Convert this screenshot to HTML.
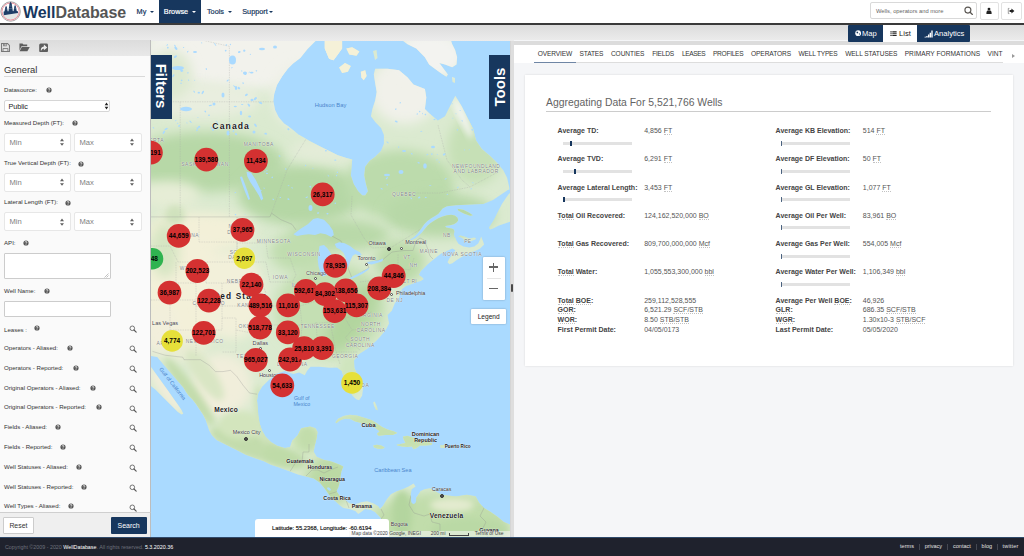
<!DOCTYPE html>
<html><head><meta charset="utf-8">
<style>
*{box-sizing:border-box;margin:0;padding:0}
html,body{width:1024px;height:556px;overflow:hidden;background:#f5f6f8;font-family:"Liberation Sans",sans-serif;color:#333}
.abs{position:absolute}
#nav{left:0;top:0;width:1024px;height:25px;background:#fff;border-bottom:2px solid #3a3a3a}
#band{left:0;top:25px;width:1024px;height:16px;background:linear-gradient(#dcdcdc,#ececec)}
#logoText{left:23px;top:3px;font-size:16px;font-weight:bold;letter-spacing:-0.05px;line-height:20px;white-space:nowrap}
.nv{top:0;height:23px;line-height:23px;font-size:7.3px;color:#17375e;-webkit-text-stroke:.2px;text-align:center;white-space:nowrap}
.caret{display:inline-block;width:0;height:0;border-left:2px solid transparent;border-right:2px solid transparent;border-top:2px solid currentColor;vertical-align:middle;margin-left:2px}
#left{left:0;top:40px;width:151px;height:497px;background:#fafafa;border-right:1px solid #bdbdbd}
#ltool{left:0;top:40px;width:151px;height:16px;background:linear-gradient(#dcdcdc,#e8e8e8);border-right:1px solid #bdbdbd}
#lfoot{left:0;top:512px;width:151px;height:25px;background:#efefef;border-top:1px solid #cfcfcf;border-right:1px solid #bdbdbd}
.lbl{left:4px;font-size:6.1px;color:#333;white-space:nowrap;line-height:8px}
.inp{background:#fff;border:1px solid #ddd;border-radius:1px}
.ph{font-size:7.6px;color:#808080;line-height:9px}
#map{left:151px;top:41px;width:359px;height:496px;background:#aadaff;overflow:hidden}
#split{left:509.6px;top:41px;width:4.2px;height:496px;background:linear-gradient(90deg,#cfcfcf,#dedede 30%,#dedede)}
#right{left:514px;top:40px;width:510px;height:497px;background:#f5f6f8}
#footer{left:0;top:537px;width:1024px;height:19px;background:#1f222d;border-top:1px solid #2f4a6b}
.vtab{background:#17375e;color:#fff;font-weight:bold;font-size:15px}
.tab{top:48.5px;font-size:6.6px;color:#333;white-space:nowrap;line-height:10px}
.k{font-size:7px;font-weight:bold;color:#444;white-space:nowrap;line-height:8px}
.v{font-size:7px;color:#555;white-space:nowrap;line-height:8px}
.u{border-bottom:1px dotted #c2c2c2}
.bar{height:3px;background:#e2e2e2;width:69.5px}
.tick{width:2px;height:5px;background:#17375e}
.bub{border-radius:50%;background:#d43131;color:#000;font-weight:bold;font-size:6.5px;text-align:center;overflow:hidden;white-space:nowrap}
.ml{position:absolute;transform:translate(-50%,-50%);white-space:nowrap;text-align:center;line-height:1.1;text-shadow:0 0 1px #fff,0 0 1px #fff}
</style></head><body>
<!-- NAV -->
<div id="nav" class="abs"></div>
<svg class="abs" style="left:0;top:0" width="24" height="24" viewBox="0 0 24 24">
<circle cx="10.6" cy="11.5" r="9.7" fill="#fff" stroke="#8d8d8d" stroke-width="0.8"/>
<path d="M3 15.4 L18.2 12.9 Q19 17 15 19.6 Q10.6 21.6 6 19.4 Q3.4 17.8 3 15.4 Z" fill="#e3e7e6"/>
<circle cx="10.6" cy="11.5" r="8.6" fill="none" stroke="#ee8f9c" stroke-width="1"/>
<path d="M4.3 12.6 L5.3 7.2 L6.1 5.7 L6.9 7.2 L7.9 12.6 Z M8.3 12.6 L9.5 3.6 L10.6 1.7 L11.7 3.6 L13 12.6 Z M13.3 12.6 L14.3 6.4 L15.1 4.8 L15.9 6.4 L17 12.6 Z" fill="#1f3d66"/>
<path d="M3.6 11.4 L17.6 11 L18.1 13.1 L3.7 15.3 Z" fill="#1f3d66"/>
<path d="M5.3 9 H6.9 M9.4 6 H11.8 M9 8.6 H12.2 M14.2 8.2 H16" stroke="#fff" stroke-width="0.4" opacity=".55"/>
</svg>
<div id="logoText" class="abs"><span style="color:#17375e">Well</span><span style="color:#555">Database</span></div>
<div class="abs nv" style="left:132px;width:27px">My <i class="caret"></i></div>
<div class="abs nv" style="left:159px;width:42px;background:#17375e;color:#fff">Browse <i class="caret"></i></div>
<div class="abs nv" style="left:201px;width:37px">Tools <i class="caret"></i></div>
<div class="abs nv" style="left:237px;width:41px">Support<i class="caret" style="margin-left:1px"></i></div>
<div class="abs inp" style="left:870px;top:2px;width:107px;height:17px;border-color:#d9d9d9;border-radius:2px"></div>
<div class="abs" style="left:876px;top:7.6px;font-size:5.75px;color:#666;line-height:7px;white-space:nowrap">Wells, operators and more</div>
<svg class="abs" style="left:963px;top:5.3px" width="11" height="11" viewBox="0 0 11 11"><circle cx="4.9" cy="5.1" r="3" fill="none" stroke="#5a5652" stroke-width="1.1"/><path d="M7.1 7.3 L9.4 9.4" stroke="#5a5652" stroke-width="1.3" stroke-linecap="round"/></svg>
<div class="abs inp" style="left:980px;top:2px;width:19px;height:18px;border-color:#e2e2e2;border-radius:2px"></div>
<svg class="abs" style="left:984.7px;top:7.4px" width="8" height="8" viewBox="0 0 8 8"><circle cx="4" cy="2.1" r="1.45" fill="#222"/><path d="M1.4 6.9 Q1.3 3.6 2.8 3.5 H5.2 Q6.7 3.6 6.6 6.9 Z" fill="#222"/></svg>
<div class="abs inp" style="left:1001px;top:2px;width:21px;height:18px;border-color:#e2e2e2;border-radius:2px"></div>
<svg class="abs" style="left:1007px;top:7.4px" width="9" height="8" viewBox="0 0 9 8"><path d="M2.4 1.4 H1.3 V6.6 H2.4" fill="none" stroke="#777" stroke-width="0.7"/><path d="M2.6 3 H4.4 V1.5 L7.4 4 L4.4 6.5 V5 H2.6 Z" fill="#222"/></svg>
<div id="band" class="abs"></div>

<!-- LEFT -->
<div id="left" class="abs"></div>
<div id="ltool" class="abs"></div>
<svg class="abs" style="left:1.1px;top:42.9px" width="9.1" height="9.1" viewBox="0 0 10 10"><path d="M0.6 0.6 H7.2 L9.3 2.7 V9.4 H0.6 Z" fill="none" stroke="#777" stroke-width="1.1"/><path d="M2.3 0.8 V3.6 H6.3 V0.8 Z" fill="#808080"/><path d="M4.6 1 V3" stroke="#e4e4e4" stroke-width="0.9"/><path d="M2.2 9.2 V6.1 H7.6 V9.2" fill="none" stroke="#777" stroke-width="1"/></svg>
<svg class="abs" style="left:19.2px;top:42.8px" width="11" height="9" viewBox="0 0 12 10"><path d="M0.4 0.6 H3.8 L4.8 1.8 H9 V3.6 H2.6 L0.4 8.2 Z" fill="#5c5c5c"/><path d="M3 4.4 H11.8 L9.2 9.2 H0.5 Z" fill="#5c5c5c"/></svg>
<svg class="abs" style="left:39px;top:42.8px" width="9.4" height="9.6" viewBox="0 0 10 10"><rect x="0.2" y="0.3" width="9.4" height="9.4" rx="1.6" fill="#5e5e5e"/><path d="M2 8.4 Q1.6 4 5.2 3.7 V1.5 L8.8 4.7 L5.2 7.7 V5.7 Q3.2 5.7 2 8.4 Z" fill="#ededed"/></svg>
<div class="abs" style="left:4px;top:63.5px;font-size:9.4px;line-height:12px;color:#333">General</div>
<div class="abs" style="left:4px;top:76px;width:141px;height:1px;background:#d9d9d9"></div>
<div class="abs lbl" style="top:85.6px">Datasource:</div><svg class="abs" style="left:45.7px;top:86.6px" width="6" height="6" viewBox="0 0 6 6"><circle cx="3" cy="3" r="2.6" fill="#555"/><path d="M2.1 2.4 Q2.1 1.5 3 1.5 Q3.9 1.5 3.9 2.3 Q3.9 2.9 3 3.2 V3.6" fill="none" stroke="#fff" stroke-width="0.7"/><circle cx="3" cy="4.5" r="0.45" fill="#fff"/></svg>
<div class="abs inp" style="left:4px;top:100px;width:106px;height:12px;border-color:#d6d6d6;border-radius:2px"></div>
<div class="abs" style="left:8.4px;top:101.5px;font-size:7.2px;line-height:9px;color:#222">Public</div>
<svg class="abs" style="left:104px;top:102px" width="5" height="8" viewBox="0 0 5 8"><path d="M2.5 0.6 L4.3 3.2 H0.7 Z M2.5 7.4 L4.3 4.8 H0.7 Z" fill="#222"/></svg>
<div class="abs lbl" style="top:119.3px">Measured Depth (FT):</div><svg class="abs" style="left:71.9px;top:120.3px" width="6" height="6" viewBox="0 0 6 6"><circle cx="3" cy="3" r="2.6" fill="#555"/><path d="M2.1 2.4 Q2.1 1.5 3 1.5 Q3.9 1.5 3.9 2.3 Q3.9 2.9 3 3.2 V3.6" fill="none" stroke="#fff" stroke-width="0.7"/><circle cx="3" cy="4.5" r="0.45" fill="#fff"/></svg>
<div class="abs inp" style="left:3.7px;top:132.5px;width:67.8px;height:19px;border-color:#e7e7e7;border-radius:2px"></div>
<div class="abs inp" style="left:73.5px;top:132.5px;width:68px;height:19px;border-color:#e7e7e7;border-radius:2px"></div>
<div class="abs ph" style="left:9.5px;top:137.5px">Min</div>
<div class="abs ph" style="left:79.5px;top:137.5px">Max</div>
<svg class="abs" style="left:58.8px;top:137.0px" width="6" height="10" viewBox="0 0 6 10"><path d="M3 1.6 L5 4.2 H1 Z M3 8.8 L5 6.2 H1 Z" fill="#606060"/></svg>
<svg class="abs" style="left:128.8px;top:137.0px" width="6" height="10" viewBox="0 0 6 10"><path d="M3 1.6 L5 4.2 H1 Z M3 8.8 L5 6.2 H1 Z" fill="#606060"/></svg>
<div class="abs lbl" style="top:159px">True Vertical Depth (FT):</div><svg class="abs" style="left:78.4px;top:160.5px" width="6" height="6" viewBox="0 0 6 6"><circle cx="3" cy="3" r="2.6" fill="#555"/><path d="M2.1 2.4 Q2.1 1.5 3 1.5 Q3.9 1.5 3.9 2.3 Q3.9 2.9 3 3.2 V3.6" fill="none" stroke="#fff" stroke-width="0.7"/><circle cx="3" cy="4.5" r="0.45" fill="#fff"/></svg>
<div class="abs inp" style="left:3.7px;top:172.5px;width:67.8px;height:19px;border-color:#e7e7e7;border-radius:2px"></div>
<div class="abs inp" style="left:73.5px;top:172.5px;width:68px;height:19px;border-color:#e7e7e7;border-radius:2px"></div>
<div class="abs ph" style="left:9.5px;top:177.5px">Min</div>
<div class="abs ph" style="left:79.5px;top:177.5px">Max</div>
<svg class="abs" style="left:58.8px;top:177.0px" width="6" height="10" viewBox="0 0 6 10"><path d="M3 1.6 L5 4.2 H1 Z M3 8.8 L5 6.2 H1 Z" fill="#606060"/></svg>
<svg class="abs" style="left:128.8px;top:177.0px" width="6" height="10" viewBox="0 0 6 10"><path d="M3 1.6 L5 4.2 H1 Z M3 8.8 L5 6.2 H1 Z" fill="#606060"/></svg>
<div class="abs lbl" style="top:198.3px">Lateral Length (FT):</div><svg class="abs" style="left:64.8px;top:199.8px" width="6" height="6" viewBox="0 0 6 6"><circle cx="3" cy="3" r="2.6" fill="#555"/><path d="M2.1 2.4 Q2.1 1.5 3 1.5 Q3.9 1.5 3.9 2.3 Q3.9 2.9 3 3.2 V3.6" fill="none" stroke="#fff" stroke-width="0.7"/><circle cx="3" cy="4.5" r="0.45" fill="#fff"/></svg>
<div class="abs inp" style="left:3.7px;top:212px;width:67.8px;height:19px;border-color:#e7e7e7;border-radius:2px"></div>
<div class="abs inp" style="left:73.5px;top:212px;width:68px;height:19px;border-color:#e7e7e7;border-radius:2px"></div>
<div class="abs ph" style="left:9.5px;top:217px">Min</div>
<div class="abs ph" style="left:79.5px;top:217px">Max</div>
<svg class="abs" style="left:58.8px;top:216.5px" width="6" height="10" viewBox="0 0 6 10"><path d="M3 1.6 L5 4.2 H1 Z M3 8.8 L5 6.2 H1 Z" fill="#606060"/></svg>
<svg class="abs" style="left:128.8px;top:216.5px" width="6" height="10" viewBox="0 0 6 10"><path d="M3 1.6 L5 4.2 H1 Z M3 8.8 L5 6.2 H1 Z" fill="#606060"/></svg>
<div class="abs lbl" style="top:239px">API:</div><svg class="abs" style="left:22.7px;top:240px" width="6" height="6" viewBox="0 0 6 6"><circle cx="3" cy="3" r="2.6" fill="#555"/><path d="M2.1 2.4 Q2.1 1.5 3 1.5 Q3.9 1.5 3.9 2.3 Q3.9 2.9 3 3.2 V3.6" fill="none" stroke="#fff" stroke-width="0.7"/><circle cx="3" cy="4.5" r="0.45" fill="#fff"/></svg>
<div class="abs inp" style="left:4px;top:253px;width:106.5px;height:26px;border-color:#ccc"></div>
<svg class="abs" style="left:104px;top:273px" width="5" height="5" viewBox="0 0 5 5"><path d="M0.5 4.5 L4.5 0.5 M2.5 4.5 L4.5 2.5" stroke="#999" stroke-width="0.6"/></svg>
<div class="abs lbl" style="top:287px">Well Name:</div><svg class="abs" style="left:44px;top:288px" width="6" height="6" viewBox="0 0 6 6"><circle cx="3" cy="3" r="2.6" fill="#555"/><path d="M2.1 2.4 Q2.1 1.5 3 1.5 Q3.9 1.5 3.9 2.3 Q3.9 2.9 3 3.2 V3.6" fill="none" stroke="#fff" stroke-width="0.7"/><circle cx="3" cy="4.5" r="0.45" fill="#fff"/></svg>
<div class="abs inp" style="left:4px;top:301px;width:106.5px;height:15.5px;border-color:#ccc"></div>
<div class="abs lbl" style="top:325.61px">Leases :</div><svg class="abs" style="left:34.3px;top:325.2px" width="6" height="6" viewBox="0 0 6 6"><circle cx="3" cy="3" r="2.6" fill="#555"/><path d="M2.1 2.4 Q2.1 1.5 3 1.5 Q3.9 1.5 3.9 2.3 Q3.9 2.9 3 3.2 V3.6" fill="none" stroke="#fff" stroke-width="0.7"/><circle cx="3" cy="4.5" r="0.45" fill="#fff"/></svg>
<svg class="abs" style="left:129.4px;top:325.4px" width="8" height="8" viewBox="0 0 8 8"><circle cx="3.3" cy="3.3" r="2.3" fill="none" stroke="#555" stroke-width="0.8"/><path d="M5 5 L7.2 7.2" stroke="#555" stroke-width="1.1" stroke-linecap="round"/></svg>
<div class="abs lbl" style="top:344.0px">Operators - Aliased:</div><svg class="abs" style="left:67px;top:345.0px" width="6" height="6" viewBox="0 0 6 6"><circle cx="3" cy="3" r="2.6" fill="#555"/><path d="M2.1 2.4 Q2.1 1.5 3 1.5 Q3.9 1.5 3.9 2.3 Q3.9 2.9 3 3.2 V3.6" fill="none" stroke="#fff" stroke-width="0.7"/><circle cx="3" cy="4.5" r="0.45" fill="#fff"/></svg>
<svg class="abs" style="left:129.4px;top:345.2px" width="8" height="8" viewBox="0 0 8 8"><circle cx="3.3" cy="3.3" r="2.3" fill="none" stroke="#555" stroke-width="0.8"/><path d="M5 5 L7.2 7.2" stroke="#555" stroke-width="1.1" stroke-linecap="round"/></svg>
<div class="abs lbl" style="top:363.8px">Operators - Reported:</div><svg class="abs" style="left:72.5px;top:364.8px" width="6" height="6" viewBox="0 0 6 6"><circle cx="3" cy="3" r="2.6" fill="#555"/><path d="M2.1 2.4 Q2.1 1.5 3 1.5 Q3.9 1.5 3.9 2.3 Q3.9 2.9 3 3.2 V3.6" fill="none" stroke="#fff" stroke-width="0.7"/><circle cx="3" cy="4.5" r="0.45" fill="#fff"/></svg>
<svg class="abs" style="left:129.4px;top:365.0px" width="8" height="8" viewBox="0 0 8 8"><circle cx="3.3" cy="3.3" r="2.3" fill="none" stroke="#555" stroke-width="0.8"/><path d="M5 5 L7.2 7.2" stroke="#555" stroke-width="1.1" stroke-linecap="round"/></svg>
<div class="abs lbl" style="top:383.6px">Original Operators - Aliased:</div><svg class="abs" style="left:90px;top:384.6px" width="6" height="6" viewBox="0 0 6 6"><circle cx="3" cy="3" r="2.6" fill="#555"/><path d="M2.1 2.4 Q2.1 1.5 3 1.5 Q3.9 1.5 3.9 2.3 Q3.9 2.9 3 3.2 V3.6" fill="none" stroke="#fff" stroke-width="0.7"/><circle cx="3" cy="4.5" r="0.45" fill="#fff"/></svg>
<svg class="abs" style="left:129.4px;top:384.8px" width="8" height="8" viewBox="0 0 8 8"><circle cx="3.3" cy="3.3" r="2.3" fill="none" stroke="#555" stroke-width="0.8"/><path d="M5 5 L7.2 7.2" stroke="#555" stroke-width="1.1" stroke-linecap="round"/></svg>
<div class="abs lbl" style="top:403.4px">Original Operators - Reported:</div><svg class="abs" style="left:95.9px;top:404.4px" width="6" height="6" viewBox="0 0 6 6"><circle cx="3" cy="3" r="2.6" fill="#555"/><path d="M2.1 2.4 Q2.1 1.5 3 1.5 Q3.9 1.5 3.9 2.3 Q3.9 2.9 3 3.2 V3.6" fill="none" stroke="#fff" stroke-width="0.7"/><circle cx="3" cy="4.5" r="0.45" fill="#fff"/></svg>
<svg class="abs" style="left:129.4px;top:404.6px" width="8" height="8" viewBox="0 0 8 8"><circle cx="3.3" cy="3.3" r="2.3" fill="none" stroke="#555" stroke-width="0.8"/><path d="M5 5 L7.2 7.2" stroke="#555" stroke-width="1.1" stroke-linecap="round"/></svg>
<div class="abs lbl" style="top:423.2px">Fields - Aliased:</div><svg class="abs" style="left:54.6px;top:424.2px" width="6" height="6" viewBox="0 0 6 6"><circle cx="3" cy="3" r="2.6" fill="#555"/><path d="M2.1 2.4 Q2.1 1.5 3 1.5 Q3.9 1.5 3.9 2.3 Q3.9 2.9 3 3.2 V3.6" fill="none" stroke="#fff" stroke-width="0.7"/><circle cx="3" cy="4.5" r="0.45" fill="#fff"/></svg>
<svg class="abs" style="left:129.4px;top:424.4px" width="8" height="8" viewBox="0 0 8 8"><circle cx="3.3" cy="3.3" r="2.3" fill="none" stroke="#555" stroke-width="0.8"/><path d="M5 5 L7.2 7.2" stroke="#555" stroke-width="1.1" stroke-linecap="round"/></svg>
<div class="abs lbl" style="top:443.0px">Fields - Reported:</div><svg class="abs" style="left:60.1px;top:444.0px" width="6" height="6" viewBox="0 0 6 6"><circle cx="3" cy="3" r="2.6" fill="#555"/><path d="M2.1 2.4 Q2.1 1.5 3 1.5 Q3.9 1.5 3.9 2.3 Q3.9 2.9 3 3.2 V3.6" fill="none" stroke="#fff" stroke-width="0.7"/><circle cx="3" cy="4.5" r="0.45" fill="#fff"/></svg>
<svg class="abs" style="left:129.4px;top:444.2px" width="8" height="8" viewBox="0 0 8 8"><circle cx="3.3" cy="3.3" r="2.3" fill="none" stroke="#555" stroke-width="0.8"/><path d="M5 5 L7.2 7.2" stroke="#555" stroke-width="1.1" stroke-linecap="round"/></svg>
<div class="abs lbl" style="top:462.8px">Well Statuses - Aliased:</div><svg class="abs" style="left:75.5px;top:463.8px" width="6" height="6" viewBox="0 0 6 6"><circle cx="3" cy="3" r="2.6" fill="#555"/><path d="M2.1 2.4 Q2.1 1.5 3 1.5 Q3.9 1.5 3.9 2.3 Q3.9 2.9 3 3.2 V3.6" fill="none" stroke="#fff" stroke-width="0.7"/><circle cx="3" cy="4.5" r="0.45" fill="#fff"/></svg>
<svg class="abs" style="left:129.4px;top:464.0px" width="8" height="8" viewBox="0 0 8 8"><circle cx="3.3" cy="3.3" r="2.3" fill="none" stroke="#555" stroke-width="0.8"/><path d="M5 5 L7.2 7.2" stroke="#555" stroke-width="1.1" stroke-linecap="round"/></svg>
<div class="abs lbl" style="top:482.6px">Well Statuses - Reported:</div><svg class="abs" style="left:81px;top:483.6px" width="6" height="6" viewBox="0 0 6 6"><circle cx="3" cy="3" r="2.6" fill="#555"/><path d="M2.1 2.4 Q2.1 1.5 3 1.5 Q3.9 1.5 3.9 2.3 Q3.9 2.9 3 3.2 V3.6" fill="none" stroke="#fff" stroke-width="0.7"/><circle cx="3" cy="4.5" r="0.45" fill="#fff"/></svg>
<svg class="abs" style="left:129.4px;top:483.8px" width="8" height="8" viewBox="0 0 8 8"><circle cx="3.3" cy="3.3" r="2.3" fill="none" stroke="#555" stroke-width="0.8"/><path d="M5 5 L7.2 7.2" stroke="#555" stroke-width="1.1" stroke-linecap="round"/></svg>
<div class="abs lbl" style="top:502.4px">Well Types - Aliased:</div><svg class="abs" style="left:68px;top:503.4px" width="6" height="6" viewBox="0 0 6 6"><circle cx="3" cy="3" r="2.6" fill="#555"/><path d="M2.1 2.4 Q2.1 1.5 3 1.5 Q3.9 1.5 3.9 2.3 Q3.9 2.9 3 3.2 V3.6" fill="none" stroke="#fff" stroke-width="0.7"/><circle cx="3" cy="4.5" r="0.45" fill="#fff"/></svg>
<svg class="abs" style="left:129.4px;top:503.6px" width="8" height="8" viewBox="0 0 8 8"><circle cx="3.3" cy="3.3" r="2.3" fill="none" stroke="#555" stroke-width="0.8"/><path d="M5 5 L7.2 7.2" stroke="#555" stroke-width="1.1" stroke-linecap="round"/></svg>
<div id="lfoot" class="abs"></div>
<div class="abs inp" style="left:2.5px;top:516.5px;width:31px;height:17px;border-color:#ccc;border-radius:1px"></div>
<div class="abs" style="left:9.4px;top:520.5px;font-size:6.9px;line-height:9px;color:#333">Reset</div>
<div class="abs" style="left:111px;top:516.5px;width:36px;height:17px;background:#17375e;border-radius:1px"></div>
<div class="abs" style="left:117.5px;top:520.5px;font-size:7px;line-height:9px;color:#fff">Search</div>
<!-- MAP -->
<div id="map" class="abs">
<!--MAPSTART-->
<svg class="abs" style="left:0;top:-1px" width="359" height="497" viewBox="151 40 359 497">
<defs><clipPath id="lc"><polygon points="151.0,40.0 316.5,40.0 307.5,49.0 300.3,58.0 293.0,63.4 287.7,68.8 282.3,76.0 276.9,85.0 274.2,94.0 273.3,101.0 275.1,110.0 278.7,117.3 284.1,123.6 288.0,126.0 293.1,129.9 298.5,134.5 303.9,137.6 309.6,141.1 320.7,146.7 331.8,152.3 337.8,155.2 346.4,158.1 352.2,159.6 351.6,166.8 350.8,175.4 353.6,184.0 358.0,191.3 362.3,195.6 365.2,195.6 368.0,191.3 366.0,184.0 364.3,175.4 365.2,166.8 369.5,161.0 375.2,156.7 381.0,150.9 383.9,143.7 383.9,135.1 381.0,127.9 375.2,122.1 370.9,116.3 372.4,109.1 375.2,100.5 376.7,91.9 375.2,83.2 373.8,74.6 375.2,68.8 387.5,68.8 399.0,70.2 407.6,77.4 413.4,84.6 424.9,88.9 426.3,97.5 424.9,109.0 429.2,113.3 437.8,120.5 445.0,116.2 449.3,107.6 455.3,95.8 461.6,105.9 467.4,117.4 473.2,128.9 476.0,140.4 481.8,149.0 490.4,156.2 497.6,163.4 503.4,170.6 507.1,177.8 509.1,186.4 509.5,189.5 507.8,190.0 504.9,192.0 498.9,195.9 493.0,199.9 483.1,203.9 475.0,204.2 465.2,204.7 455.5,205.3 446.8,206.3 442.5,208.5 440.4,211.2 438.2,213.9 435.0,216.1 431.2,218.2 427.4,220.9 424.2,224.2 422.0,227.4 419.8,230.6 417.7,233.3 415.0,236.0 412.3,238.2 410.1,239.3 411.2,240.2 415.5,238.3 418.8,235.6 422.0,232.4 424.7,229.1 427.4,225.7 430.6,223.0 434.4,220.4 438.2,218.3 442.5,216.5 446.8,215.2 451.2,214.7 454.9,215.5 457.6,217.7 458.2,220.4 456.6,222.5 453.9,224.2 450.1,225.2 446.8,225.8 445.2,226.3 446.3,227.4 449.0,227.9 451.7,228.5 453.9,229.6 454.4,231.7 453.9,233.9 454.4,236.6 455.5,238.2 456.4,240.5 458.4,243.8 463.3,246.4 469.3,247.4 474.2,246.4 478.2,243.4 480.1,239.5 481.1,236.5 483.1,241.4 484.1,244.4 480.1,248.4 476.2,250.4 471.2,252.3 466.3,254.3 461.3,257.3 456.4,260.2 452.4,263.2 449.5,264.2 447.5,262.2 449.5,258.3 452.4,254.3 455.4,250.3 452.4,248.4 448.5,250.3 444.5,252.3 441.6,253.3 437.6,256.3 432.6,260.2 427.7,264.2 423.7,268.2 420.8,271.1 418.8,275.1 421.8,277.1 423.7,279.0 420.8,281.0 416.8,282.0 411.9,284.0 405.9,286.0 402.0,289.0 399.0,297.8 394.7,303.5 391.8,310.7 387.5,315.0 389.0,323.6 386.0,329.4 380.3,336.6 376.0,341.0 367.2,348.8 358.4,354.6 354.0,360.5 354.3,367.8 356.9,373.7 360.6,381.0 363.1,388.3 362.1,395.7 359.1,400.3 356.2,399.3 352.5,395.7 350.0,391.0 346.2,385.0 343.5,377.0 342.0,371.0 337.0,367.5 330.0,367.8 319.2,366.7 310.6,366.7 307.0,371.0 304.8,375.3 299.1,372.4 293.3,373.9 284.7,371.0 275.9,374.1 268.4,380.4 262.1,386.7 258.3,393.0 257.0,400.5 257.8,408.1 258.3,415.6 259.5,423.2 262.1,430.7 265.8,437.0 270.9,442.1 277.2,445.8 284.7,447.9 290.0,447.1 292.2,440.8 297.6,435.4 301.2,428.2 310.2,426.4 315.6,428.2 317.5,432.0 316.7,437.9 314.7,445.8 313.7,451.8 316.7,456.7 323.6,459.7 331.5,461.6 339.4,464.6 343.4,466.6 341.4,471.5 340.4,477.5 339.4,483.4 338.4,487.3 336.5,491.3 339.4,495.3 344.4,499.2 349.3,503.2 355.3,504.2 361.2,502.2 367.1,501.2 373.1,503.2 378.0,506.1 380.0,509.1 382.9,506.1 386.9,499.2 390.9,494.3 396.8,491.3 402.7,489.3 408.6,486.4 413.6,483.4 415.6,486.4 411.6,489.3 410.6,495.3 412.6,500.2 416.6,497.2 420.5,491.3 424.5,489.3 430.0,488.3 441.6,494.8 456.0,496.6 466.8,494.8 475.6,496.3 479.0,502.4 483.7,507.8 490.4,511.8 497.2,516.6 503.9,522.0 510.0,524.5 510.0,537.0 386.0,537.0 382.0,520.0 380.0,517.0 378.0,515.0 375.0,512.1 371.1,510.1 365.1,509.1 361.2,512.1 358.2,514.0 355.3,511.1 349.3,509.1 343.4,508.1 339.4,505.1 335.5,501.2 331.5,498.2 328.6,494.3 326.6,491.3 323.6,487.3 319.7,482.4 313.7,478.4 305.8,476.5 297.9,474.5 290.0,471.5 278.4,467.2 270.9,464.7 263.3,461.0 255.8,458.4 245.7,454.7 235.6,449.6 225.5,444.6 216.5,440.0 212.0,435.3 209.3,430.8 207.5,425.4 205.7,420.0 203.0,414.6 199.4,409.2 195.8,403.8 192.2,399.3 188.7,395.7 186.0,392.1 183.3,387.6 178.8,382.2 173.4,376.0 168.0,369.7 162.6,363.4 157.2,357.1 152.7,356.2 151.0,356.0"/>
<polygon points="151.0,367.0 151.8,367.9 155.4,373.3 159.9,379.6 164.4,385.8 168.9,392.1 173.4,398.4 177.9,404.7 181.5,410.1 183.3,413.7 181.5,414.6 177.9,411.9 173.4,407.4 168.9,402.9 164.4,398.4 159.9,393.9 155.4,389.4 151.8,386.7 151.0,386.0"/>
<polygon points="510.0,193.0 508.8,194.0 505.9,197.9 501.9,203.9 497.9,211.8 494.0,219.7 489.0,227.6 490.0,229.6 493.0,228.6 498.9,225.6 504.9,223.6 510.0,221.7"/>
<polygon points="457.4,208.8 463.3,209.8 469.3,212.8 472.8,215.3 470.2,215.7 464.3,213.7 458.4,210.8"/>
<polygon points="458.4,236.5 461.3,237.5 465.3,240.5 470.2,241.4 475.2,239.5 476.2,238.5 474.2,237.5 469.3,238.5 464.3,236.5 460.4,235.5"/>
<polygon points="335.4,422.3 338.1,418.7 343.5,416.0 349.8,414.7 357.0,415.6 364.2,417.8 371.4,419.9 376.8,423.2 382.2,427.1 387.6,429.5 393.8,431.3 397.4,433.1 392.9,434.9 385.8,434.9 378.6,435.8 376.8,434.0 379.5,431.3 375.0,427.7 369.6,425.0 362.4,423.2 355.2,421.4 349.8,418.7 344.4,418.7 339.9,420.5 336.3,423.2"/>
<polygon points="396.5,444.7 401.9,443.8 405.5,442.9 403.7,439.4 402.8,436.7 407.3,435.8 412.7,437.6 419.9,439.4 427.1,441.2 432.5,443.3 431.6,445.1 425.3,445.6 419.9,445.6 416.3,448.3 413.6,449.2 411.8,446.5 407.3,446.9 401.9,446.5 397.4,445.6"/>
<polygon points="373.2,445.6 376.8,444.7 381.3,445.6 384.9,447.4 382.2,448.9 377.7,448.7 374.1,447.4"/>
<polygon points="440.1,445.3 445.1,445.1 445.1,448.0 440.6,448.0"/>
<polygon points="373.2,402.5 374.6,401.6 377.1,407.0 377.7,410.2 375.9,409.7 374.1,406.1"/>
<polygon points="401.9,40.0 407.6,44.3 416.3,48.6 424.9,57.3 429.2,64.4 434.9,68.8 440.7,73.1 446.4,76.8 447.9,74.5 443.6,68.8 439.3,63.0 445.0,64.4 452.2,67.3 456.5,64.4 457.1,57.3 455.1,50.1 452.2,44.3 450.8,40.0"/>
<polygon points="324.8,40.0 324.8,48.6 329.1,58.7 333.5,60.2 337.8,54.4 342.1,48.6 342.1,40.0"/>
<polygon points="346.4,48.6 352.2,47.2 359.4,51.5 356.5,55.8 349.3,54.4"/>
<polygon points="339.2,67.4 345.0,63.0 350.8,65.9 347.9,71.7 342.1,73.1"/>
<polygon points="360.8,71.7 365.2,70.3 366.6,76.0 363.7,80.3 361.4,77.5"/>
<polygon points="373.0,51.0 376.5,50.0 377.5,58.0 375.0,60.0"/>
<polygon points="452.0,77.0 455.0,78.0 455.0,83.0 452.5,82.0"/>
</clipPath><filter id="b6" x="-30%" y="-30%" width="160%" height="160%"><feGaussianBlur stdDeviation="6"/></filter><filter id="b3" x="-30%" y="-30%" width="160%" height="160%"><feGaussianBlur stdDeviation="3"/></filter></defs>
<rect x="151" y="40" width="359" height="497" fill="#aadaff"/>
<g clip-path="url(#lc)">
<rect x="151" y="40" width="359" height="497" fill="#dbead0"/>
<ellipse cx="245" cy="50" rx="100" ry="40" fill="#f2f2ec" filter="url(#b6)"/>
<ellipse cx="300" cy="95" rx="28" ry="32" fill="#eef0e6" filter="url(#b6)"/>
<ellipse cx="200" cy="100" rx="60" ry="18" fill="#e9eedf" filter="url(#b6)"/>
<ellipse cx="170" cy="75" rx="22" ry="25" fill="#dde9d0" filter="url(#b6)"/>
<ellipse cx="405" cy="90" rx="35" ry="34" fill="#f1f1ea" filter="url(#b6)"/>
<ellipse cx="430" cy="55" rx="35" ry="25" fill="#f3f3f0" filter="url(#b6)"/>
<ellipse cx="205" cy="162" rx="80" ry="30" fill="#b7d8a7" filter="url(#b6)"/>
<ellipse cx="170" cy="195" rx="30" ry="14" fill="#e6edd6" filter="url(#b6)"/>
<ellipse cx="300" cy="195" rx="62" ry="30" fill="#b5d7a5" filter="url(#b6)"/>
<ellipse cx="330" cy="150" rx="40" ry="12" fill="#e4ecd8" filter="url(#b6)"/>
<ellipse cx="400" cy="185" rx="55" ry="35" fill="#bcdbac" filter="url(#b6)"/>
<ellipse cx="440" cy="215" rx="55" ry="22" fill="#b7d8a7" filter="url(#b6)"/>
<ellipse cx="475" cy="150" rx="28" ry="35" fill="#c6e0b6" filter="url(#b6)"/>
<ellipse cx="340" cy="235" rx="50" ry="16" fill="#b9d9a9" filter="url(#b6)"/>
<ellipse cx="463" cy="118" rx="4" ry="22" fill="#f5f5f3" filter="url(#b3)" transform="rotate(-25 463 118)"/>
<ellipse cx="200" cy="232" rx="55" ry="20" fill="#f3f0d8" filter="url(#b6)"/>
<ellipse cx="185" cy="290" rx="45" ry="60" fill="#f3f0d9" filter="url(#b6)"/>
<ellipse cx="232" cy="295" rx="32" ry="45" fill="#f2f0da" filter="url(#b6)"/>
<ellipse cx="165" cy="250" rx="14" ry="28" fill="#d5e5c2" filter="url(#b6)"/>
<ellipse cx="175" cy="215" rx="10" ry="10" fill="#d0e2bd" filter="url(#b3)"/>
<ellipse cx="160" cy="330" rx="18" ry="25" fill="#f2efdc" filter="url(#b6)"/>
<ellipse cx="185" cy="350" rx="20" ry="12" fill="#e9ecd4" filter="url(#b6)"/>
<ellipse cx="330" cy="310" rx="55" ry="48" fill="#c4dfb3" filter="url(#b6)"/>
<ellipse cx="352" cy="318" rx="16" ry="40" fill="#b2d59f" filter="url(#b6)" transform="rotate(35 352 318)"/>
<ellipse cx="400" cy="262" rx="25" ry="22" fill="#bbdaa9" filter="url(#b6)"/>
<ellipse cx="300" cy="252" rx="30" ry="20" fill="#c0ddaf" filter="url(#b6)"/>
<ellipse cx="350" cy="375" rx="12" ry="20" fill="#cfe5be" filter="url(#b3)"/>
<ellipse cx="222" cy="385" rx="30" ry="32" fill="#f1eedb" filter="url(#b6)"/>
<ellipse cx="190" cy="392" rx="7" ry="42" fill="#c3dcac" filter="url(#b3)" transform="rotate(-36 190 392)"/>
<ellipse cx="250" cy="445" rx="42" ry="12" fill="#c3dcac" filter="url(#b3)" transform="rotate(20 250 445)"/>
<ellipse cx="262" cy="415" rx="6" ry="30" fill="#cde2b8" filter="url(#b3)" transform="rotate(-8 262 415)"/>
<ellipse cx="166" cy="390" rx="7" ry="26" fill="#efedda" filter="url(#b3)" transform="rotate(-35 166 390)"/>
<ellipse cx="305" cy="440" rx="14" ry="14" fill="#cbe3b6" filter="url(#b3)"/>
<ellipse cx="330" cy="480" rx="25" ry="25" fill="#bbd9a4" filter="url(#b6)"/>
<ellipse cx="440" cy="520" rx="70" ry="28" fill="#c1ddab" filter="url(#b6)"/>
<ellipse cx="452" cy="505" rx="22" ry="7" fill="#e3ebcf" filter="url(#b3)"/>
<ellipse cx="402" cy="515" rx="10" ry="25" fill="#b4d59f" filter="url(#b3)"/>
<ellipse cx="470" cy="530" rx="40" ry="12" fill="#bad9a5" filter="url(#b3)"/>
<ellipse cx="390" cy="432" rx="70" ry="22" fill="#c6e0af" filter="url(#b6)"/>
<ellipse cx="240" cy="425" rx="22" ry="14" fill="#d3e5bd" filter="url(#b3)"/>
<ellipse cx="285" cy="458" rx="22" ry="10" fill="#bfdba8" filter="url(#b3)" transform="rotate(15 285 458)"/>
<ellipse cx="308" cy="438" rx="10" ry="12" fill="#c2ddab" filter="url(#b3)"/>
<ellipse cx="272" cy="425" rx="8" ry="18" fill="#cbe1b4" filter="url(#b3)" transform="rotate(-20 272 425)"/>
<ellipse cx="205" cy="375" rx="10" ry="30" fill="#d9e6c4" filter="url(#b3)" transform="rotate(-35 205 375)"/>
</g>
<polygon points="324.8,40.0 324.8,48.6 329.1,58.7 333.5,60.2 337.8,54.4 342.1,48.6 342.1,40.0" fill="#f5f1d8"/>
<polygon points="346.4,48.6 352.2,47.2 359.4,51.5 356.5,55.8 349.3,54.4" fill="#f5f1d8"/>
<polygon points="339.2,67.4 345.0,63.0 350.8,65.9 347.9,71.7 342.1,73.1" fill="#f5f1d8"/>
<polygon points="360.8,71.7 365.2,70.3 366.6,76.0 363.7,80.3 361.4,77.5" fill="#f5f1d8"/>
<g fill="none" stroke="#8f8f8f" stroke-width="0.5" opacity=".6" clip-path="url(#lc)">
<polyline points="151,216.9 269.8,216.9 271.6,213.2 280.9,219.7 292,224.3 296,230"/>
<polyline points="332,236 341,241 346,252 348,268 352,278 369,268 367,263 383,259.5 392,252 404,250.5 413,250.5 416,241 420,238 424,240 427,247 430,256 433,259"/>
<polyline points="152.5,351.4 165.1,355.2 175.2,356.4 182.7,357.2 184,359.7 200.4,359.7 209.2,365.3 215.5,371.6 223,371.6 230.6,370.3 236.9,376.6 243.2,385.4 249.5,393 257,394.2"/>
<polyline points="290,471.5 296,462 302,462 303,452 309,452 309,444"/><polyline points="302,462 308,463 313,459"/><polyline points="306,476 312,470 318,470 324,473 330,470 338,467"/><polyline points="329,494 336,492 339,489"/><polyline points="346,500 349,508"/><polyline points="381,509 384,515 381,519"/><polyline points="411,495 409,505 414,513 424,516 430,514 432,522 440,524 440,537"/><polyline points="478,498 484,508 480,516 486,522 482,530 488,537"/>
</g>
<g fill="none" stroke="#a8a8a8" stroke-width="0.5" stroke-dasharray="0.8 0.9" opacity=".8" clip-path="url(#lc)">
<path d="M151,101.8 H274 M201.4,40 L229.4,46.3 V217 M180.2,101.8 V217 M271.6,213 L287,170 L306,139 M352,196 L351,215 L364,238 L372,248 L392,247 M392,247 L424,227 M410,193 L440,193 L470,187 L498,172 M438,125 L447,160 L462,180 L470,187"/>
<path d="M199,217 V242 M151,246 L170,246 L178,262 L190,262 M190,262 H236 M199,242 H237 V262 M237,262 V217 M237,243 H266 L268,258 M236,262 H266 L270,282 M206,262 V283 M206,283 H262 L266,293 M222,283 V306 H196 V283 M196,306 V330 H222 V306 M222,306 H268 L270,327 M222,318 H236 V330 L268,336 M236,330 V352 H222 M196,330 V356 M170,300 V330 M170,300 H196 M151,300 H170 L176,283 H196 M176,283 V262 M196,330 H170 L162,345 M268,258 L290,258 L296,275 L292,283 L300,300 L296,306 M270,282 H292 M270,306 H300 L302,325 H270 M302,325 L300,352 L285,354 M302,325 L330,322 L345,318 M316,322 L318,352 M330,322 L336,352 L340,364 M300,306 L320,300 L334,300 M345,318 L372,312 M345,318 L352,330 L372,328 M352,330 L345,338 L360,350 M336,352 L358,352 M372,296 L378,300 L390,296 M360,282 L392,278 M392,278 L398,268 L410,270 M398,268 V254 M410,270 L414,258"/>
</g>
<polygon points="293.4,234.2 300.6,228.8 307.8,224.3 313.2,218.9 317.7,218.0 324.0,219.8 329.4,225.2 332.9,230.6 333.8,235.1 331.2,236.9 325.8,234.2 320.4,233.3 315.0,235.1 308.7,234.2 302.4,235.1 297.0,236.0" fill="#aadaff"/>
<polygon points="319.5,245.9 324.0,245.0 327.6,248.6 331.2,254.0 332.0,261.2 331.2,268.3 327.6,274.6 323.1,276.4 320.4,272.8 318.6,266.5 317.7,259.4 318.6,252.2" fill="#aadaff"/>
<polygon points="334.7,244.1 339.2,242.3 344.6,243.2 350.0,245.9 354.5,249.5 359.9,252.2 361.7,254.9 359.0,255.8 355.4,254.0 352.7,255.8 350.9,259.4 349.1,264.7 347.3,268.3 346.4,262.9 345.5,257.6 343.7,253.1 340.1,249.5 336.5,247.7" fill="#aadaff"/>
<polygon points="349.1,278.2 354.5,275.5 359.9,272.8 365.3,270.1 369.8,267.4 368.0,270.1 362.6,273.7 357.2,276.4 351.8,279.1" fill="#aadaff"/>
<polygon points="367.1,262.0 372.5,261.2 378.8,260.3 383.3,258.5 382.4,261.2 377.0,262.9 371.6,264.4 368.0,263.8" fill="#aadaff"/>
<polygon points="246.5,171.8 251.1,172.7 255.8,180.1 260.4,189.4 263.2,198.7 261.3,200.5 258.6,195.0 253.9,187.5 250.2,182.0 247.4,176.4" fill="#aadaff"/>
<polygon points="240.0,177.0 242.0,176.5 244.5,183.0 247.5,191.0 250.0,199.0 248.5,200.0 245.5,193.0 242.5,185.0" fill="#aadaff"/>
<ellipse cx="310.5" cy="208" rx="2" ry="3" fill="#aadaff"/>
<ellipse cx="413.6" cy="499.5" rx="2.6" ry="4.4" fill="#aadaff"/>
<ellipse cx="329" cy="489" rx="2.2" ry="1.3" fill="#aadaff" transform="rotate(35 329 489)"/>
<ellipse cx="232.5" cy="60" rx="3.5" ry="4.5" fill="#aadaff"/>
<ellipse cx="178" cy="68" rx="6" ry="2" fill="#aadaff"/>
<ellipse cx="186" cy="109" rx="6" ry="2.2" fill="#aadaff"/>
<ellipse cx="223" cy="95" rx="1.5" ry="2.5" fill="#aadaff"/>
<ellipse cx="245" cy="73" rx="2" ry="1.5" fill="#aadaff"/>
<ellipse cx="214" cy="104" rx="1.5" ry="1.5" fill="#aadaff"/>
<ellipse cx="236" cy="88" rx="1.2" ry="2" fill="#aadaff"/>
<ellipse cx="252" cy="100" rx="1.5" ry="1.2" fill="#aadaff"/>
<ellipse cx="195" cy="52" rx="2" ry="1" fill="#aadaff"/>
<ellipse cx="262" cy="49" rx="3" ry="1.2" fill="#aadaff"/>
<ellipse cx="275" cy="47" rx="2" ry="1.5" fill="#aadaff"/>
<ellipse cx="241" cy="113" rx="1.2" ry="2.2" fill="#aadaff"/>
<ellipse cx="228" cy="133" rx="1.5" ry="2.5" fill="#aadaff"/>
<ellipse cx="254" cy="132" rx="1.5" ry="1.5" fill="#aadaff"/>
<ellipse cx="401" cy="172" rx="2.5" ry="2" fill="#aadaff"/>
<ellipse cx="425" cy="166" rx="1.8" ry="2.8" fill="#aadaff"/>
<ellipse cx="387" cy="175" rx="3" ry="1.2" fill="#aadaff"/>
<ellipse cx="433" cy="147" rx="2" ry="1.2" fill="#aadaff"/>
<ellipse cx="404" cy="151" rx="2" ry="1" fill="#aadaff"/>
<g clip-path="url(#lc)" fill="#aadaff">
<ellipse cx="187.7" cy="51.6" rx="1.1" ry="0.5" transform="rotate(-52 187.7 51.6)"/>
<ellipse cx="212.0" cy="127.4" rx="1.7" ry="0.9" transform="rotate(-33 212.0 127.4)"/>
<ellipse cx="231.9" cy="67.7" rx="0.8" ry="0.5" transform="rotate(-34 231.9 67.7)"/>
<ellipse cx="181.4" cy="70.8" rx="1.4" ry="0.9" transform="rotate(43 181.4 70.8)"/>
<ellipse cx="242.1" cy="104.5" rx="1.3" ry="0.5" transform="rotate(-3 242.1 104.5)"/>
<ellipse cx="166.1" cy="128.9" rx="1.8" ry="0.8" transform="rotate(-24 166.1 128.9)"/>
<ellipse cx="227.7" cy="80.5" rx="1.4" ry="0.7" transform="rotate(-41 227.7 80.5)"/>
<ellipse cx="197.9" cy="117.6" rx="0.6" ry="0.4" transform="rotate(15 197.9 117.6)"/>
<ellipse cx="194.2" cy="91.7" rx="1.2" ry="0.6" transform="rotate(60 194.2 91.7)"/>
<ellipse cx="181.7" cy="80.4" rx="0.8" ry="0.8" transform="rotate(-27 181.7 80.4)"/>
<ellipse cx="205.3" cy="111.5" rx="1.0" ry="0.8" transform="rotate(49 205.3 111.5)"/>
<ellipse cx="167.8" cy="47.7" rx="0.8" ry="0.9" transform="rotate(14 167.8 47.7)"/>
<ellipse cx="187.9" cy="72.8" rx="0.8" ry="0.7" transform="rotate(-55 187.9 72.8)"/>
<ellipse cx="255.5" cy="125.3" rx="1.9" ry="0.9" transform="rotate(55 255.5 125.3)"/>
<ellipse cx="213.3" cy="129.7" rx="1.4" ry="1.0" transform="rotate(-25 213.3 129.7)"/>
<ellipse cx="181.1" cy="83.3" rx="0.7" ry="0.7" transform="rotate(55 181.1 83.3)"/>
<ellipse cx="201.7" cy="42.9" rx="0.6" ry="0.5" transform="rotate(34 201.7 42.9)"/>
<ellipse cx="206.3" cy="69.0" rx="0.6" ry="1.1" transform="rotate(-9 206.3 69.0)"/>
<ellipse cx="183.6" cy="47.5" rx="0.6" ry="0.5" transform="rotate(21 183.6 47.5)"/>
<ellipse cx="175.0" cy="45.8" rx="1.2" ry="0.6" transform="rotate(60 175.0 45.8)"/>
<ellipse cx="188.6" cy="80.2" rx="0.6" ry="0.7" transform="rotate(-30 188.6 80.2)"/>
<ellipse cx="226.3" cy="44.9" rx="0.9" ry="0.6" transform="rotate(-35 226.3 44.9)"/>
<ellipse cx="187.0" cy="122.9" rx="0.7" ry="0.4" transform="rotate(51 187.0 122.9)"/>
<ellipse cx="236.1" cy="134.1" rx="1.1" ry="1.0" transform="rotate(18 236.1 134.1)"/>
<ellipse cx="225.7" cy="50.6" rx="0.8" ry="1.0" transform="rotate(48 225.7 50.6)"/>
<ellipse cx="249.6" cy="116.4" rx="1.5" ry="1.0" transform="rotate(3 249.6 116.4)"/>
<ellipse cx="249.2" cy="105.8" rx="0.9" ry="1.0" transform="rotate(55 249.2 105.8)"/>
<ellipse cx="163.9" cy="132.3" rx="1.9" ry="0.9" transform="rotate(-55 163.9 132.3)"/>
<ellipse cx="246.4" cy="94.9" rx="1.6" ry="1.0" transform="rotate(-34 246.4 94.9)"/>
<ellipse cx="153.5" cy="127.8" rx="0.5" ry="1.0" transform="rotate(-46 153.5 127.8)"/>
<ellipse cx="251.7" cy="72.7" rx="1.8" ry="0.9" transform="rotate(-3 251.7 72.7)"/>
<ellipse cx="230.4" cy="44.5" rx="0.6" ry="0.8" transform="rotate(-1 230.4 44.5)"/>
<ellipse cx="173.4" cy="75.7" rx="1.7" ry="0.8" transform="rotate(-59 173.4 75.7)"/>
<ellipse cx="209.0" cy="115.2" rx="1.0" ry="0.6" transform="rotate(-2 209.0 115.2)"/>
<ellipse cx="216.8" cy="121.8" rx="1.7" ry="0.4" transform="rotate(46 216.8 121.8)"/>
<ellipse cx="181.8" cy="70.1" rx="1.8" ry="0.7" transform="rotate(36 181.8 70.1)"/>
<ellipse cx="177.6" cy="123.3" rx="0.8" ry="0.5" transform="rotate(-1 177.6 123.3)"/>
<ellipse cx="202.8" cy="92.4" rx="1.9" ry="0.9" transform="rotate(-59 202.8 92.4)"/>
<ellipse cx="198.8" cy="92.7" rx="1.2" ry="0.9" transform="rotate(-2 198.8 92.7)"/>
<ellipse cx="265.7" cy="133.7" rx="1.4" ry="0.9" transform="rotate(13 265.7 133.7)"/>
<ellipse cx="199.1" cy="126.9" rx="1.2" ry="1.0" transform="rotate(-23 199.1 126.9)"/>
<ellipse cx="243.1" cy="83.1" rx="0.7" ry="0.9" transform="rotate(-17 243.1 83.1)"/>
<ellipse cx="250.3" cy="54.4" rx="0.6" ry="0.5" transform="rotate(37 250.3 54.4)"/>
<ellipse cx="179.1" cy="125.9" rx="1.1" ry="0.8" transform="rotate(-18 179.1 125.9)"/>
<ellipse cx="244.3" cy="50.7" rx="1.1" ry="1.1" transform="rotate(-38 244.3 50.7)"/>
<ellipse cx="249.2" cy="72.4" rx="1.0" ry="0.4" transform="rotate(-58 249.2 72.4)"/>
<ellipse cx="238.9" cy="88.1" rx="1.4" ry="1.1" transform="rotate(31 238.9 88.1)"/>
<ellipse cx="248.8" cy="104.8" rx="1.6" ry="0.8" transform="rotate(40 248.8 104.8)"/>
<ellipse cx="197.5" cy="128.3" rx="1.1" ry="0.8" transform="rotate(48 197.5 128.3)"/>
<ellipse cx="256.4" cy="70.8" rx="0.8" ry="0.6" transform="rotate(15 256.4 70.8)"/>
<ellipse cx="299.5" cy="125.6" rx="1.1" ry="0.7" transform="rotate(38 299.5 125.6)"/>
<ellipse cx="194.7" cy="80.3" rx="0.5" ry="0.5" transform="rotate(5 194.7 80.3)"/>
<ellipse cx="254.9" cy="99.2" rx="1.0" ry="1.1" transform="rotate(15 254.9 99.2)"/>
<ellipse cx="175.9" cy="48.3" rx="2.0" ry="1.1" transform="rotate(50 175.9 48.3)"/>
<ellipse cx="241.8" cy="71.0" rx="0.6" ry="0.6" transform="rotate(-33 241.8 71.0)"/>
<ellipse cx="289.5" cy="125.0" rx="1.7" ry="0.5" transform="rotate(-31 289.5 125.0)"/>
<ellipse cx="197.0" cy="130.2" rx="0.7" ry="1.0" transform="rotate(22 197.0 130.2)"/>
<ellipse cx="233.4" cy="131.2" rx="0.9" ry="0.8" transform="rotate(-41 233.4 131.2)"/>
<ellipse cx="167.2" cy="45.0" rx="1.0" ry="0.5" transform="rotate(-53 167.2 45.0)"/>
<ellipse cx="260.5" cy="102.9" rx="1.9" ry="1.0" transform="rotate(26 260.5 102.9)"/>
<ellipse cx="235.3" cy="106.5" rx="1.6" ry="0.8" transform="rotate(0 235.3 106.5)"/>
<ellipse cx="175.7" cy="120.5" rx="1.2" ry="0.4" transform="rotate(-40 175.7 120.5)"/>
<ellipse cx="210.5" cy="105.4" rx="1.8" ry="0.6" transform="rotate(-14 210.5 105.4)"/>
<ellipse cx="215.2" cy="44.6" rx="1.8" ry="0.4" transform="rotate(55 215.2 44.6)"/>
<ellipse cx="175.4" cy="56.6" rx="1.8" ry="1.0" transform="rotate(-32 175.4 56.6)"/>
<ellipse cx="234.4" cy="86.3" rx="1.6" ry="0.5" transform="rotate(39 234.4 86.3)"/>
<ellipse cx="288.4" cy="129.2" rx="1.1" ry="1.0" transform="rotate(40 288.4 129.2)"/>
<ellipse cx="239.3" cy="52.0" rx="1.4" ry="1.0" transform="rotate(-23 239.3 52.0)"/>
<ellipse cx="248.1" cy="125.4" rx="1.4" ry="0.4" transform="rotate(16 248.1 125.4)"/>
<ellipse cx="190.6" cy="121.8" rx="1.5" ry="0.6" transform="rotate(47 190.6 121.8)"/>
<ellipse cx="244.9" cy="73.5" rx="1.8" ry="1.0" transform="rotate(47 244.9 73.5)"/>
<ellipse cx="255.7" cy="98.2" rx="1.3" ry="1.1" transform="rotate(-18 255.7 98.2)"/>
<ellipse cx="427.3" cy="154.6" rx="1.1" ry="0.5" transform="rotate(-36 427.3 154.6)"/>
<ellipse cx="386.8" cy="178.2" rx="1.4" ry="0.7" transform="rotate(-46 386.8 178.2)"/>
<ellipse cx="473.0" cy="182.7" rx="1.0" ry="0.4" transform="rotate(41 473.0 182.7)"/>
<ellipse cx="439.2" cy="162.2" rx="0.4" ry="0.8" transform="rotate(-56 439.2 162.2)"/>
<ellipse cx="425.4" cy="114.5" rx="0.8" ry="0.8" transform="rotate(30 425.4 114.5)"/>
<ellipse cx="457.5" cy="129.8" rx="0.8" ry="0.7" transform="rotate(-56 457.5 129.8)"/>
<ellipse cx="419.2" cy="197.5" rx="1.2" ry="0.8" transform="rotate(-24 419.2 197.5)"/>
<ellipse cx="445.6" cy="178.9" rx="1.2" ry="0.6" transform="rotate(-39 445.6 178.9)"/>
<ellipse cx="381.7" cy="188.7" rx="1.4" ry="0.5" transform="rotate(31 381.7 188.7)"/>
<ellipse cx="418.7" cy="162.8" rx="1.3" ry="0.6" transform="rotate(14 418.7 162.8)"/>
<ellipse cx="404.3" cy="151.1" rx="0.4" ry="0.5" transform="rotate(-26 404.3 151.1)"/>
<ellipse cx="466.9" cy="113.2" rx="1.2" ry="0.4" transform="rotate(58 466.9 113.2)"/>
<ellipse cx="395.8" cy="109.2" rx="0.6" ry="0.9" transform="rotate(20 395.8 109.2)"/>
<ellipse cx="464.6" cy="149.9" rx="0.5" ry="0.6" transform="rotate(-5 464.6 149.9)"/>
<ellipse cx="474.1" cy="116.6" rx="0.7" ry="0.8" transform="rotate(-46 474.1 116.6)"/>
<ellipse cx="472.3" cy="129.7" rx="1.0" ry="0.7" transform="rotate(49 472.3 129.7)"/>
<ellipse cx="387.2" cy="184.7" rx="0.6" ry="0.8" transform="rotate(-57 387.2 184.7)"/>
<ellipse cx="452.8" cy="118.1" rx="0.6" ry="0.4" transform="rotate(-21 452.8 118.1)"/>
<ellipse cx="411.2" cy="198.3" rx="1.1" ry="0.6" transform="rotate(59 411.2 198.3)"/>
<ellipse cx="396.3" cy="121.5" rx="1.5" ry="0.9" transform="rotate(22 396.3 121.5)"/>
<ellipse cx="473.0" cy="105.7" rx="1.4" ry="0.8" transform="rotate(20 473.0 105.7)"/>
<ellipse cx="460.1" cy="110.4" rx="0.6" ry="0.5" transform="rotate(-3 460.1 110.4)"/>
<ellipse cx="431.9" cy="154.1" rx="0.8" ry="0.8" transform="rotate(41 431.9 154.1)"/>
<ellipse cx="452.1" cy="103.8" rx="0.6" ry="0.5" transform="rotate(-31 452.1 103.8)"/>
<ellipse cx="434.5" cy="119.5" rx="1.1" ry="0.6" transform="rotate(-16 434.5 119.5)"/>
<ellipse cx="447.3" cy="194.4" rx="0.6" ry="0.6" transform="rotate(58 447.3 194.4)"/>
<ellipse cx="400.2" cy="102.7" rx="0.6" ry="0.8" transform="rotate(28 400.2 102.7)"/>
<ellipse cx="469.2" cy="149.7" rx="0.4" ry="0.6" transform="rotate(26 469.2 149.7)"/>
<ellipse cx="417.3" cy="114.0" rx="0.8" ry="0.6" transform="rotate(-17 417.3 114.0)"/>
<ellipse cx="422.4" cy="113.6" rx="0.4" ry="0.8" transform="rotate(28 422.4 113.6)"/>
<ellipse cx="419.7" cy="111.5" rx="0.7" ry="0.7" transform="rotate(47 419.7 111.5)"/>
<ellipse cx="425.8" cy="197.4" rx="1.0" ry="0.5" transform="rotate(14 425.8 197.4)"/>
<ellipse cx="437.0" cy="159.9" rx="1.2" ry="0.4" transform="rotate(-8 437.0 159.9)"/>
<ellipse cx="456.0" cy="113.8" rx="0.4" ry="0.5" transform="rotate(-26 456.0 113.8)"/>
<ellipse cx="421.3" cy="131.4" rx="1.1" ry="0.5" transform="rotate(-19 421.3 131.4)"/>
<ellipse cx="444.2" cy="154.4" rx="1.5" ry="0.9" transform="rotate(-29 444.2 154.4)"/>
<ellipse cx="411.8" cy="153.8" rx="1.0" ry="0.6" transform="rotate(44 411.8 153.8)"/>
<ellipse cx="398.7" cy="147.1" rx="0.5" ry="0.8" transform="rotate(11 398.7 147.1)"/>
<ellipse cx="473.8" cy="114.3" rx="1.2" ry="0.7" transform="rotate(-54 473.8 114.3)"/>
<ellipse cx="457.9" cy="187.4" rx="0.5" ry="0.9" transform="rotate(34 457.9 187.4)"/>
<ellipse cx="437.4" cy="154.4" rx="0.7" ry="0.4" transform="rotate(-3 437.4 154.4)"/>
<ellipse cx="462.3" cy="120.9" rx="0.9" ry="0.5" transform="rotate(23 462.3 120.9)"/>
<ellipse cx="471.2" cy="188.8" rx="0.7" ry="0.6" transform="rotate(-60 471.2 188.8)"/>
<ellipse cx="430.3" cy="185.4" rx="1.3" ry="0.4" transform="rotate(-8 430.3 185.4)"/>
<ellipse cx="387.6" cy="142.4" rx="1.4" ry="0.5" transform="rotate(41 387.6 142.4)"/>
<ellipse cx="335.3" cy="203.2" rx="0.6" ry="0.8" transform="rotate(51 335.3 203.2)"/>
<ellipse cx="339.9" cy="150.7" rx="0.4" ry="0.5" transform="rotate(2 339.9 150.7)"/>
<ellipse cx="279.5" cy="156.0" rx="1.0" ry="0.7" transform="rotate(16 279.5 156.0)"/>
<ellipse cx="288.6" cy="185.7" rx="1.0" ry="0.4" transform="rotate(-8 288.6 185.7)"/>
<ellipse cx="249.2" cy="156.8" rx="1.1" ry="0.5" transform="rotate(-19 249.2 156.8)"/>
<ellipse cx="264.1" cy="188.2" rx="0.5" ry="0.7" transform="rotate(-52 264.1 188.2)"/>
<ellipse cx="335.3" cy="160.2" rx="1.1" ry="0.6" transform="rotate(-9 335.3 160.2)"/>
<ellipse cx="266.9" cy="173.4" rx="1.1" ry="0.6" transform="rotate(4 266.9 173.4)"/>
<ellipse cx="261.0" cy="190.6" rx="0.6" ry="0.6" transform="rotate(18 261.0 190.6)"/>
<ellipse cx="292.1" cy="187.7" rx="0.9" ry="0.5" transform="rotate(55 292.1 187.7)"/>
<ellipse cx="306.8" cy="197.2" rx="1.3" ry="0.6" transform="rotate(-20 306.8 197.2)"/>
<ellipse cx="266.9" cy="170.6" rx="0.7" ry="0.5" transform="rotate(-35 266.9 170.6)"/>
<ellipse cx="285.8" cy="169.0" rx="0.7" ry="0.7" transform="rotate(-22 285.8 169.0)"/>
<ellipse cx="325.7" cy="201.8" rx="0.7" ry="0.7" transform="rotate(-39 325.7 201.8)"/>
<ellipse cx="245.1" cy="214.7" rx="0.4" ry="0.4" transform="rotate(44 245.1 214.7)"/>
<ellipse cx="235.3" cy="192.6" rx="0.9" ry="0.5" transform="rotate(-31 235.3 192.6)"/>
<ellipse cx="336.6" cy="175.6" rx="0.6" ry="0.6" transform="rotate(28 336.6 175.6)"/>
<ellipse cx="265.5" cy="155.8" rx="1.1" ry="0.4" transform="rotate(-53 265.5 155.8)"/>
<ellipse cx="235.5" cy="214.6" rx="0.8" ry="0.7" transform="rotate(7 235.5 214.6)"/>
<ellipse cx="337.4" cy="172.3" rx="0.7" ry="0.7" transform="rotate(-60 337.4 172.3)"/>
<ellipse cx="273.2" cy="199.4" rx="0.9" ry="0.6" transform="rotate(52 273.2 199.4)"/>
<ellipse cx="280.4" cy="197.5" rx="0.8" ry="0.4" transform="rotate(-13 280.4 197.5)"/>
<ellipse cx="257.1" cy="151.8" rx="0.7" ry="0.5" transform="rotate(-5 257.1 151.8)"/>
<ellipse cx="312.5" cy="199.3" rx="1.2" ry="0.5" transform="rotate(20 312.5 199.3)"/>
<ellipse cx="328.4" cy="175.7" rx="1.2" ry="0.4" transform="rotate(50 328.4 175.7)"/>
<ellipse cx="327.5" cy="213.7" rx="1.1" ry="0.7" transform="rotate(-8 327.5 213.7)"/>
<ellipse cx="310.3" cy="207.1" rx="0.9" ry="0.6" transform="rotate(51 310.3 207.1)"/>
<ellipse cx="264.9" cy="171.8" rx="0.4" ry="0.8" transform="rotate(16 264.9 171.8)"/>
<ellipse cx="305.6" cy="165.5" rx="0.6" ry="0.6" transform="rotate(45 305.6 165.5)"/>
<ellipse cx="272.2" cy="177.4" rx="0.8" ry="0.7" transform="rotate(-45 272.2 177.4)"/>
<ellipse cx="325.9" cy="150.8" rx="1.0" ry="0.7" transform="rotate(-4 325.9 150.8)"/>
<ellipse cx="312.9" cy="168.2" rx="0.5" ry="0.5" transform="rotate(-28 312.9 168.2)"/>
<ellipse cx="310.3" cy="186.7" rx="1.0" ry="0.8" transform="rotate(33 310.3 186.7)"/>
<ellipse cx="318.1" cy="213.0" rx="1.2" ry="0.7" transform="rotate(-18 318.1 213.0)"/>
<ellipse cx="288.4" cy="199.1" rx="1.1" ry="0.8" transform="rotate(29 288.4 199.1)"/>
</g>
</svg>
<div class="ml" style="left:80.2px;top:86.0px;font-size:8.6px;color:#1a1a1a;font-weight:bold;letter-spacing:1.1px;">Canada</div>
<div class="ml" style="left:179.5px;top:63.8px;font-size:5.8px;color:#4a85cc;font-weight:normal;letter-spacing:0px;text-shadow:none;">Hudson Bay</div>
<div class="ml" style="left:107.8px;top:103.5px;font-size:4.9px;color:#7c827e;font-weight:normal;letter-spacing:0.6px;">MANITOBA</div>
<div class="ml" style="left:54.0px;top:123.5px;font-size:4.9px;color:#7c827e;font-weight:normal;letter-spacing:0.6px;">SASKATCHEWAN</div>
<div class="ml" style="left:253.1px;top:153.6px;font-size:4.9px;color:#7c827e;font-weight:normal;letter-spacing:0.6px;">QUEBEC</div>
<div class="ml" style="left:325.2px;top:127.6px;font-size:4.9px;color:#7c827e;font-weight:normal;letter-spacing:0.55px;line-height:5.4px;">NEWFOUNDLAND<br>AND LABRADOR</div>
<div class="ml" style="left:122.9px;top:201.1px;font-size:4.9px;color:#7c827e;font-weight:normal;letter-spacing:0.6px;">MINNESOTA</div>
<div class="ml" style="left:153.1px;top:213.7px;font-size:4.9px;color:#7c827e;font-weight:normal;letter-spacing:0.6px;">WISCONSIN</div>
<div class="ml" style="left:129.5px;top:236.6px;font-size:4.9px;color:#7c827e;font-weight:normal;letter-spacing:0.6px;">IOWA</div>
<div class="ml" style="left:165.0px;top:233.0px;font-size:5.4px;color:#444;font-weight:normal;letter-spacing:0px;">Chicago</div>
<div class="abs" style="left:163.4px;top:235.9px;width:3px;height:3px;border-radius:50%;background:#fff;border:.8px solid #444"></div>
<div class="ml" style="left:166.6px;top:285.5px;font-size:4.9px;color:#7c827e;font-weight:normal;letter-spacing:0.5px;">TENNESSEE</div>
<div class="ml" style="left:14.1px;top:282.4px;font-size:5.6px;color:#444;font-weight:normal;letter-spacing:0px;">Las Vegas</div>
<div class="ml" style="left:109.4px;top:301.8px;font-size:5.6px;color:#444;font-weight:normal;letter-spacing:0px;">Dallas</div>
<div class="abs" style="left:108.2px;top:305.5px;width:3px;height:3px;border-radius:50%;background:#fff;border:.8px solid #444"></div>
<div class="ml" style="left:82.5px;top:255.6px;font-size:8.3px;color:#1a1a1a;font-weight:bold;letter-spacing:1.1px;">United States</div>
<div class="ml" style="left:34.0px;top:194.8px;font-size:4.9px;color:#7c827e;font-weight:normal;letter-spacing:0.6px;">MONTANA</div>
<div class="ml" style="left:88.5px;top:214.8px;font-size:4.9px;color:#7c827e;font-weight:normal;letter-spacing:0.5px;line-height:5.6px;">SOUTH<br>DAKOTA</div>
<div class="ml" style="left:87.5px;top:189.0px;font-size:4.9px;color:#7c827e;font-weight:normal;letter-spacing:0.5px;line-height:5.6px;">NORTH<br>DAKOTA</div>
<div class="ml" style="left:43.2px;top:228.0px;font-size:4.9px;color:#7c827e;font-weight:normal;letter-spacing:0.6px;">WYOMING</div>
<div class="ml" style="left:91.5px;top:240.8px;font-size:4.9px;color:#7c827e;font-weight:normal;letter-spacing:0.6px;">NEBRASKA</div>
<div class="ml" style="left:57.8px;top:263.2px;font-size:4.9px;color:#7c827e;font-weight:normal;letter-spacing:0.6px;">COLORADO</div>
<div class="ml" style="left:98.0px;top:264.8px;font-size:4.9px;color:#7c827e;font-weight:normal;letter-spacing:0.6px;">KANSAS</div>
<div class="ml" style="left:103.8px;top:285.8px;font-size:4.9px;color:#7c827e;font-weight:normal;letter-spacing:0.6px;">OKLAHOMA</div>
<div class="ml" style="left:94.9px;top:315.8px;font-size:4.9px;color:#7c827e;font-weight:normal;letter-spacing:0.6px;">TEXAS</div>
<div class="ml" style="left:18.5px;top:302.8px;font-size:4.9px;color:#7c827e;font-weight:normal;letter-spacing:0.6px;">ARIZONA</div>
<div class="ml" style="left:152.5px;top:244.5px;font-size:4.9px;color:#7c827e;font-weight:normal;letter-spacing:0.5px;">ILLINOIS</div>
<div class="ml" style="left:0.2px;top:99.8px;font-size:4.9px;color:#7c827e;font-weight:normal;letter-spacing:0.6px;">ALBERTA</div>
<div class="ml" style="left:141.2px;top:324.4px;font-size:4.9px;color:#7c827e;font-weight:normal;letter-spacing:0.5px;">LOUISIANA</div>
<div class="ml" style="left:205.8px;top:345.0px;font-size:4.9px;color:#7c827e;font-weight:normal;letter-spacing:0.5px;">FLORIDA</div>
<div class="ml" style="left:53.7px;top:300.6px;font-size:4.9px;color:#7c827e;font-weight:normal;letter-spacing:0.6px;">NEW MEXICO</div>
<div class="ml" style="left:226.1px;top:202.8px;font-size:5.4px;color:#333;font-weight:normal;letter-spacing:0px;">Ottawa</div>
<div class="abs" style="left:236.0px;top:205.9px;width:4px;height:4px;border-radius:50%;background:#555;border:1px solid #333"></div>
<div class="ml" style="left:264.7px;top:202.1px;font-size:5.4px;color:#333;font-weight:normal;letter-spacing:0px;">Montreal</div>
<div class="abs" style="left:249.4px;top:205.8px;width:3px;height:3px;border-radius:50%;background:#fff;border:.8px solid #444"></div>
<div class="ml" style="left:215.6px;top:217.9px;font-size:5.4px;color:#333;font-weight:normal;letter-spacing:0px;">Toronto</div>
<div class="abs" style="left:214.0px;top:221.6px;width:3px;height:3px;border-radius:50%;background:#fff;border:.8px solid #444"></div>
<div class="ml" style="left:277.8px;top:211.4px;font-size:4.9px;color:#7c827e;font-weight:normal;letter-spacing:0.6px;">MAINE</div>
<div class="ml" style="left:311.5px;top:213.6px;font-size:4.9px;color:#7c827e;font-weight:normal;letter-spacing:0.6px;">NOVA SCOTIA</div>
<div class="ml" style="left:295.9px;top:195.0px;font-size:4.9px;color:#7c827e;font-weight:normal;letter-spacing:0.4px;">NB</div>
<div class="ml" style="left:316.8px;top:200.7px;font-size:4.9px;color:#7c827e;font-weight:normal;letter-spacing:0.4px;">PE</div>
<div class="ml" style="left:256.1px;top:216.9px;font-size:4.9px;color:#7c827e;font-weight:normal;letter-spacing:0.4px;">VT</div>
<div class="ml" style="left:262.4px;top:224.9px;font-size:4.9px;color:#7c827e;font-weight:normal;letter-spacing:0.4px;">NH</div>
<div class="ml" style="left:250.0px;top:234.9px;font-size:4.9px;color:#7c827e;font-weight:normal;letter-spacing:0.4px;">MA</div>
<div class="ml" style="left:258.8px;top:240.5px;font-size:4.9px;color:#7c827e;font-weight:normal;letter-spacing:0.4px;">CT RI</div>
<div class="ml" style="left:259.6px;top:253.1px;font-size:5.4px;color:#333;font-weight:normal;letter-spacing:0px;">Philadelphia</div>
<div class="abs" style="left:239.3px;top:251.5px;width:3px;height:3px;border-radius:50%;background:#fff;border:.8px solid #444"></div>
<div class="ml" style="left:243.7px;top:260.0px;font-size:4.9px;color:#7c827e;font-weight:normal;letter-spacing:0.4px;">DE NJ</div>
<div class="ml" style="left:219.1px;top:274.8px;font-size:4.9px;color:#7c827e;font-weight:normal;letter-spacing:0.5px;">VIRGINIA</div>
<div class="ml" style="left:220.0px;top:286.2px;font-size:4.9px;color:#7c827e;font-weight:normal;letter-spacing:0.5px;line-height:5.4px;">NORTH<br>CAROLINA</div>
<div class="ml" style="left:209.2px;top:301.3px;font-size:4.9px;color:#7c827e;font-weight:normal;letter-spacing:0.5px;line-height:5.4px;">SOUTH<br>CAROLINA</div>
<div class="ml" style="left:194.1px;top:315.9px;font-size:4.9px;color:#7c827e;font-weight:normal;letter-spacing:0.5px;">GEORGIA</div>
<div class="ml" style="left:118.2px;top:334.9px;font-size:5.4px;color:#333;font-weight:normal;letter-spacing:0px;">Houston</div>
<div class="abs" style="left:116.8px;top:327.9px;width:3px;height:3px;border-radius:50%;background:#fff;border:.8px solid #444"></div>
<div class="ml" style="left:150.8px;top:359.8px;font-size:5.3px;color:#4a85cc;font-weight:normal;letter-spacing:0px;line-height:6px;text-shadow:none;">Gulf of<br>Mexico</div>
<div class="ml" style="left:21.2px;top:342.5px;font-size:5.3px;color:#4a85cc;font-weight:normal;letter-spacing:0px;transform:translate(-50%,-50%) rotate(52deg);text-shadow:none;">Gulf of California</div>
<div class="ml" style="left:75.1px;top:368.7px;font-size:6.6px;color:#1a1a1a;font-weight:bold;letter-spacing:0.2px;">Mexico</div>
<div class="ml" style="left:95.6px;top:392.2px;font-size:5.4px;color:#333;font-weight:normal;letter-spacing:0px;">Mexico City</div>
<div class="abs" style="left:92.7px;top:396.0px;width:4px;height:4px;border-radius:50%;background:#555;border:1px solid #333"></div>
<div class="ml" style="left:217.5px;top:384.0px;font-size:5.6px;color:#1a1a1a;font-weight:bold;letter-spacing:0px;">Cuba</div>
<div class="ml" style="left:274.6px;top:397.0px;font-size:5.4px;color:#1a1a1a;font-weight:bold;letter-spacing:0px;line-height:5.6px;">Dominican<br>Republic</div>
<div class="ml" style="left:306.7px;top:405.7px;font-size:4.6px;color:#1a1a1a;font-weight:bold;letter-spacing:0px;">Puerto Rico</div>
<div class="ml" style="left:241.9px;top:428.9px;font-size:5.6px;color:#4a85cc;font-weight:normal;letter-spacing:0px;text-shadow:none;">Caribbean Sea</div>
<div class="ml" style="left:148.9px;top:420.5px;font-size:5.3px;color:#1a1a1a;font-weight:bold;letter-spacing:0px;">Guatemala</div>
<div class="ml" style="left:168.9px;top:426.8px;font-size:5.3px;color:#1a1a1a;font-weight:bold;letter-spacing:0px;">Honduras</div>
<div class="ml" style="left:181.2px;top:439.2px;font-size:5.3px;color:#1a1a1a;font-weight:bold;letter-spacing:0px;">Nicaragua</div>
<div class="ml" style="left:186.0px;top:457.5px;font-size:5.3px;color:#1a1a1a;font-weight:bold;letter-spacing:0px;">Costa Rica</div>
<div class="ml" style="left:210.8px;top:466.3px;font-size:5.3px;color:#1a1a1a;font-weight:bold;letter-spacing:0px;">Panama</div>
<div class="ml" style="left:248.2px;top:484.1px;font-size:5.3px;color:#333;font-weight:normal;letter-spacing:0px;">Bogota</div>
<div class="ml" style="left:290.6px;top:449.0px;font-size:5.3px;color:#333;font-weight:normal;letter-spacing:0px;">Caracas</div>
<div class="abs" style="left:289.0px;top:452.5px;width:4px;height:4px;border-radius:50%;background:#555;border:1px solid #333"></div>
<div class="ml" style="left:295.5px;top:475.0px;font-size:6.6px;color:#1a1a1a;font-weight:bold;letter-spacing:0.2px;">Venezuela</div>
<div class="ml" style="left:338.0px;top:490.2px;font-size:5.3px;color:#1a1a1a;font-weight:bold;letter-spacing:0px;">Guyana</div>
<svg class="abs" style="left:0;top:-1px" width="359" height="497" viewBox="151 40 359 497" font-family="Liberation Sans, sans-serif" font-weight="bold" font-size="6.5" text-anchor="middle" fill="#000">
<circle cx="150.9" cy="152.6" r="11.9" fill="#d43131"/><text x="150.9" y="154.9">10,191</text>
<circle cx="206.3" cy="159.6" r="11.9" fill="#d43131"/><text x="206.3" y="161.9">139,580</text>
<circle cx="255.9" cy="161.0" r="11.9" fill="#d43131"/><text x="255.9" y="163.3">11,434</text>
<circle cx="322.7" cy="194.4" r="11.9" fill="#d43131"/><text x="322.7" y="196.7">26,317</text>
<circle cx="178.7" cy="235.9" r="11.9" fill="#d43131"/><text x="178.7" y="238.2">44,659</text>
<circle cx="242.5" cy="229.9" r="11.9" fill="#d43131"/><text x="242.5" y="232.2">37,965</text>
<circle cx="152.5" cy="258.7" r="10.8" fill="#2fb350"/><text x="152.5" y="261.0">148</text>
<circle cx="244.3" cy="258.2" r="10.8" fill="#e6e03a"/><text x="244.3" y="260.5">2,097</text>
<circle cx="197.4" cy="271.0" r="11.9" fill="#d43131"/><text x="197.4" y="273.3">202,523</text>
<circle cx="251.5" cy="284.6" r="11.9" fill="#d43131"/><text x="251.5" y="286.9">22,140</text>
<circle cx="335.3" cy="265.9" r="11.9" fill="#d43131"/><text x="335.3" y="268.2">78,935</text>
<circle cx="169.5" cy="292.6" r="11.9" fill="#d43131"/><text x="169.5" y="294.9">36,987</text>
<circle cx="208.9" cy="300.6" r="11.9" fill="#d43131"/><text x="208.9" y="302.9">122,228</text>
<circle cx="305.9" cy="291.0" r="11.9" fill="#d43131"/><text x="305.9" y="293.3">592,617</text>
<circle cx="345.8" cy="290.4" r="11.9" fill="#d43131"/><text x="345.8" y="292.7">138,656</text>
<circle cx="324.9" cy="294.1" r="11.9" fill="#d43131"/><text x="324.9" y="296.4">84,302</text>
<circle cx="379.3" cy="288.4" r="11.9" fill="#d43131"/><text x="379.3" y="290.7">208,384</text>
<circle cx="393.7" cy="276.0" r="11.9" fill="#d43131"/><text x="393.7" y="278.3">44,846</text>
<circle cx="260.4" cy="305.3" r="11.9" fill="#d43131"/><text x="260.4" y="307.6">489,516</text>
<circle cx="288.1" cy="305.3" r="11.9" fill="#d43131"/><text x="288.1" y="307.6">11,016</text>
<circle cx="356.5" cy="305.3" r="11.9" fill="#d43131"/><text x="356.5" y="307.6">115,307</text>
<circle cx="334.7" cy="311.1" r="11.9" fill="#d43131"/><text x="334.7" y="313.4">153,631</text>
<circle cx="260.1" cy="327.5" r="11.9" fill="#d43131"/><text x="260.1" y="329.8">518,778</text>
<circle cx="287.8" cy="332.4" r="11.9" fill="#d43131"/><text x="287.8" y="334.7">33,120</text>
<circle cx="203.7" cy="332.8" r="11.9" fill="#d43131"/><text x="203.7" y="335.1">122,701</text>
<circle cx="172.1" cy="340.9" r="10.8" fill="#e6e03a"/><text x="172.1" y="343.2">4,774</text>
<circle cx="322.0" cy="348.2" r="11.9" fill="#d43131"/><text x="322.0" y="350.5">13,391</text>
<circle cx="290.1" cy="359.5" r="11.9" fill="#d43131"/><text x="290.1" y="361.8">242,917</text>
<circle cx="304.2" cy="348.2" r="11.9" fill="#d43131"/><text x="304.2" y="350.5">25,810</text>
<circle cx="255.8" cy="360.0" r="11.9" fill="#d43131"/><text x="255.8" y="362.3">965,027</text>
<circle cx="282.3" cy="385.4" r="11.9" fill="#d43131"/><text x="282.3" y="387.7">54,633</text>
<circle cx="352.0" cy="382.9" r="10.8" fill="#e6e03a"/><text x="352.0" y="385.2">1,450</text>
</svg>
<div class="abs" style="left:332px;top:215.5px;width:21.5px;height:43.5px;background:#fff;border-radius:1px;box-shadow:0 0 2px rgba(0,0,0,.3)"></div>
<div class="abs" style="left:336px;top:237px;width:13.5px;height:1px;background:#e6e6e6"></div>
<div class="abs" style="left:338px;top:225.3px;width:9px;height:1.6px;background:#666"></div>
<div class="abs" style="left:341.7px;top:221.6px;width:1.6px;height:9px;background:#666"></div>
<div class="abs" style="left:338px;top:246.8px;width:9px;height:1.6px;background:#666"></div>
<div class="abs" style="left:320px;top:267.7px;width:35.3px;height:15.5px;background:#fff;border-radius:1px;box-shadow:0 0 2px rgba(0,0,0,.3);font-size:6.6px;line-height:15.5px;text-align:center;color:#222">Legend</div>
<div class="abs" style="left:104px;top:477.7px;width:133.5px;height:18.3px;background:#fff;border-radius:3px 3px 0 0;font-size:5.8px;-webkit-text-stroke:.15px;line-height:19px;text-align:center;color:#111;white-space:nowrap">Latitude: 55.2368, Longitude: -60.6194</div>
<div class="abs" style="left:198px;top:490px;width:161px;height:6px;background:rgba(245,245,245,.55)"></div>
<div class="abs" style="left:200.6px;top:489.8px;font-size:4.9px;line-height:6px;color:#444;white-space:nowrap">Map data ©2020 Google, INEGI</div>
<div class="abs" style="left:279.8px;top:489.8px;font-size:4.9px;line-height:6px;color:#444;white-space:nowrap">200 mi</div>
<div class="abs" style="left:297.8px;top:492px;width:20px;height:2.5px;border:0.8px solid #444;border-top:0"></div>
<div class="abs" style="left:323.7px;top:489.8px;font-size:4.9px;line-height:6px;color:#444;white-space:nowrap">Terms of Use</div>
<!--MAPEND-->
</div>
<div id="split" class="abs"></div>
<div class="abs" style="left:511px;top:284px;width:2px;height:8px;background:#4a4a4a;border-radius:1px"></div>
<div id="ftab" class="abs vtab" style="left:150.5px;top:55px;width:21.5px;height:64px"><div style="position:absolute;left:50%;top:50%;transform:translate(-50%,-50%) rotate(90deg);font-size:15px;letter-spacing:-0.08px;line-height:15px;white-space:nowrap;margin-top:-1px">Filters</div></div>
<div id="ttab" class="abs vtab" style="left:488.6px;top:55px;width:21px;height:64px"><div style="position:absolute;left:50%;top:50%;transform:translate(-50%,-50%) rotate(-90deg);font-size:15px;line-height:15px;white-space:nowrap;margin-top:0.4px;margin-left:-0.6px">Tools</div></div>
<!-- RIGHT -->
<div id="right" class="abs"></div>
<div class="abs" style="left:513.8px;top:41px;width:511px;height:4px;background:#dcdcdc"></div>
<div class="abs" style="left:514px;top:45px;width:510px;height:17.5px;background:#fff"></div>
<div class="abs" style="left:534px;top:62px;width:468.5px;height:1px;background:#ddd"></div>
<div class="abs" style="left:534px;top:62px;width:42px;height:1px;background:#6f86a5"></div>
<div class="abs tab" style="left:537.8px;letter-spacing:-0.153px">OVERVIEW</div>
<div class="abs tab" style="left:579.6px;letter-spacing:-0.179px">STATES</div>
<div class="abs tab" style="left:610.9px;letter-spacing:-0.072px">COUNTIES</div>
<div class="abs tab" style="left:652.2px;letter-spacing:-0.216px">FIELDS</div>
<div class="abs tab" style="left:682px;letter-spacing:-0.395px">LEASES</div>
<div class="abs tab" style="left:712.9px;letter-spacing:-0.266px">PROFILES</div>
<div class="abs tab" style="left:751px;letter-spacing:-0.089px">OPERATORS</div>
<div class="abs tab" style="left:798.5px;letter-spacing:-0.205px">WELL TYPES</div>
<div class="abs tab" style="left:845.2px;letter-spacing:-0.098px">WELL STATUSES</div>
<div class="abs tab" style="left:904.7px;letter-spacing:0.022px">PRIMARY FORMATIONS</div>
<div class="abs tab" style="left:987.6px;letter-spacing:-0.033px">VINT</div>
<div class="abs" style="left:1012px;top:54px;width:0;height:0;border-top:2px solid transparent;border-bottom:2px solid transparent;border-left:3px solid #999"></div>
<div class="abs" style="left:525px;top:74.5px;width:488px;height:291.5px;background:#fff;box-shadow:0 0 2px rgba(0,0,0,0.12)"></div>
<div class="abs" style="left:546px;top:95.5px;font-size:10.4px;line-height:13px;color:#636363;white-space:nowrap">Aggregating Data For 5,521,766 Wells</div>
<div class="abs" style="left:546px;top:111px;width:445px;height:1px;background:#ccc"></div>
<div class="abs k" style="left:557.6px;top:127.1px">Average TD:</div>
<div class="abs v" style="left:644.2px;top:127.1px">4,856 <span class="u">FT</span></div>
<div class="abs k" style="left:775.6px;top:127.1px">Average KB Elevation:</div>
<div class="abs v" style="left:862.8px;top:127.1px">514 <span class="u">FT</span></div>
<div class="abs bar" style="left:562.7px;top:141.6px"></div><div class="abs tick" style="left:570px;top:140.6px"></div>
<div class="abs bar" style="left:780.9px;top:141.6px"></div><div class="abs tick" style="left:780.9px;top:140.6px;width:1px;opacity:.75"></div>
<div class="abs k" style="left:557.6px;top:155.37px">Average TVD:</div>
<div class="abs v" style="left:644.2px;top:155.37px">6,291 <span class="u">FT</span></div>
<div class="abs k" style="left:775.6px;top:155.37px">Average DF Elevation:</div>
<div class="abs v" style="left:862.8px;top:155.37px">50 <span class="u">FT</span></div>
<div class="abs bar" style="left:562.7px;top:169.87px"></div><div class="abs tick" style="left:573.7px;top:168.87px"></div>
<div class="abs bar" style="left:780.9px;top:169.87px"></div><div class="abs tick" style="left:780.9px;top:168.87px;width:1px;opacity:.75"></div>
<div class="abs k" style="left:557.6px;top:183.64px">Average Lateral Length:</div>
<div class="abs v" style="left:644.2px;top:183.64px">3,453 <span class="u">FT</span></div>
<div class="abs k" style="left:775.6px;top:183.64px">Average GL Elevation:</div>
<div class="abs v" style="left:862.8px;top:183.64px">1,077 <span class="u">FT</span></div>
<div class="abs bar" style="left:562.7px;top:198.14px"></div><div class="abs tick" style="left:562.7px;top:197.14px"></div>
<div class="abs bar" style="left:780.9px;top:198.14px"></div><div class="abs tick" style="left:780.9px;top:197.14px;width:1px;opacity:.75"></div>
<div class="abs k" style="left:557.6px;top:211.91px"><span class="u">Total</span> Oil Recovered:</div>
<div class="abs v" style="left:644.2px;top:211.91px">124,162,520,000 <span class="u">BO</span></div>
<div class="abs k" style="left:775.6px;top:211.91px">Average Oil Per Well:</div>
<div class="abs v" style="left:862.8px;top:211.91px">83,961 <span class="u">BO</span></div>
<div class="abs bar" style="left:780.9px;top:226.41px"></div><div class="abs tick" style="left:780.9px;top:225.41px;width:1px;opacity:.75"></div>
<div class="abs k" style="left:557.6px;top:240.18px"><span class="u">Total</span> Gas Recovered:</div>
<div class="abs v" style="left:644.2px;top:240.18px">809,700,000,000 <span class="u">Mcf</span></div>
<div class="abs k" style="left:775.6px;top:240.18px">Average Gas Per Well:</div>
<div class="abs v" style="left:862.8px;top:240.18px">554,005 <span class="u">Mcf</span></div>
<div class="abs bar" style="left:780.9px;top:254.68px"></div><div class="abs tick" style="left:780.9px;top:253.68px;width:1px;opacity:.75"></div>
<div class="abs k" style="left:557.6px;top:268.45px"><span class="u">Total</span> Water:</div>
<div class="abs v" style="left:644.2px;top:268.45px">1,055,553,300,000 <span class="u">bbl</span></div>
<div class="abs k" style="left:775.6px;top:268.45px">Average Water Per Well:</div>
<div class="abs v" style="left:862.8px;top:268.45px">1,106,349 <span class="u">bbl</span></div>
<div class="abs bar" style="left:780.9px;top:282.95px"></div><div class="abs tick" style="left:780.9px;top:281.95px;width:1px;opacity:.75"></div>
<div class="abs k" style="left:557.6px;top:296.9px"><span class="u">Total</span> <span class="u">BOE</span>:</div>
<div class="abs v" style="left:644.2px;top:296.9px">259,112,528,555</div>
<div class="abs k" style="left:775.6px;top:296.9px">Average Per Well <span class="u">BOE</span>:</div>
<div class="abs v" style="left:862.8px;top:296.9px">46,926</div>
<div class="abs k" style="left:557.6px;top:306.47px"><span class="u">GOR</span>:</div>
<div class="abs v" style="left:644.2px;top:306.47px">6,521.29 <span class="u">SCF/STB</span></div>
<div class="abs k" style="left:775.6px;top:306.47px"><span class="u">GLR</span>:</div>
<div class="abs v" style="left:862.8px;top:306.47px">686.35 <span class="u">SCF/STB</span></div>
<div class="abs k" style="left:557.6px;top:316.04px"><span class="u">WOR</span>:</div>
<div class="abs v" style="left:644.2px;top:316.04px">8.50 <span class="u">STB/STB</span></div>
<div class="abs k" style="left:775.6px;top:316.04px"><span class="u">WGR</span>:</div>
<div class="abs v" style="left:862.8px;top:316.04px">1.30x10-3 <span class="u">STB/SCF</span></div>
<div class="abs k" style="left:557.6px;top:325.61px">First Permit Date:</div>
<div class="abs v" style="left:644.2px;top:325.61px">04/05/0173</div>
<div class="abs k" style="left:775.6px;top:325.61px">Last Permit Date:</div>
<div class="abs v" style="left:862.8px;top:325.61px">05/05/2020</div>
<!-- VIEWBTNS -->
<div class="abs" style="left:848px;top:25px;width:122px;height:17px;background:#17375e;border-radius:1px"></div>
<div class="abs" style="left:883px;top:25px;width:34px;height:17px;background:#fff"></div>
<svg class="abs" style="left:854.7px;top:30.3px" width="6.4" height="6.4" viewBox="0 0 7 7"><circle cx="3.5" cy="3.5" r="3.2" fill="#fff"/><path d="M2 1.5 L3.6 2.4 L3 3.8 L1.6 3.4 Z M4.2 3.6 L5.6 4 L4.6 5.6 Z" fill="#17375e"/></svg>
<div class="abs" style="left:862px;top:28px;font-size:7.6px;line-height:11px;color:#fff">Map</div>
<svg class="abs" style="left:890.3px;top:30.8px" width="7.2" height="5.6" viewBox="0 0 8 7"><path d="M0 0.3h1.6v1.5H0z M2.4 0.3h5.4v1.5H2.4z M0 2.7h1.6v1.5H0z M2.4 2.7h5.4v1.5H2.4z M0 5.1h1.6v1.5H0z M2.4 5.1h5.4v1.5H2.4z" fill="#222"/></svg>
<div class="abs" style="left:899px;top:28px;font-size:7.6px;line-height:11px;color:#222">List</div>
<svg class="abs" style="left:923.5px;top:30px" width="9.6" height="7.6" viewBox="0 0 10 9"><path d="M0 8h1.6v1H0z M2 7h1.6v2H2z M4 5.4h1.6V9H4z M6 3.2h1.6V9H6z M8 0.6h1.6V9H8z" fill="#fff"/></svg>
<div class="abs" style="left:934px;top:28px;font-size:7.6px;line-height:11px;color:#fff">Analytics</div>
<!-- FOOTER -->
<div id="footer" class="abs"></div>
<div class="abs" style="left:5px;top:543.5px;font-size:5.35px;line-height:7px;color:#6d717c;white-space:nowrap">Copyright ©2009 - 2020 <span style="color:#fff">WellDatabase</span>. All rights reserved. <span style="color:#fff">5.3.2020.36</span></div>
<div class="abs" style="left:900px;top:543.4px;font-size:5.5px;line-height:7px;color:#e0e0e0;white-space:nowrap;letter-spacing:0.050px">terms</div>
<div class="abs" style="left:924.7px;top:543.4px;font-size:5.5px;line-height:7px;color:#e0e0e0;white-space:nowrap;letter-spacing:-0.031px">privacy</div>
<div class="abs" style="left:953.1px;top:543.4px;font-size:5.5px;line-height:7px;color:#e0e0e0;white-space:nowrap;letter-spacing:-0.019px">contact</div>
<div class="abs" style="left:981.5px;top:543.4px;font-size:5.5px;line-height:7px;color:#e0e0e0;white-space:nowrap;letter-spacing:0.073px">blog</div>
<div class="abs" style="left:1002.6px;top:543.4px;font-size:5.5px;line-height:7px;color:#e0e0e0;white-space:nowrap;letter-spacing:0.176px">twitter</div>
<div class="abs" style="left:918.9px;top:543.5px;width:1px;height:6.5px;background:#454852"></div>
<div class="abs" style="left:947.0px;top:543.5px;width:1px;height:6.5px;background:#454852"></div>
<div class="abs" style="left:975.8px;top:543.5px;width:1px;height:6.5px;background:#454852"></div>
<div class="abs" style="left:996.9px;top:543.5px;width:1px;height:6.5px;background:#454852"></div>
</body></html>
